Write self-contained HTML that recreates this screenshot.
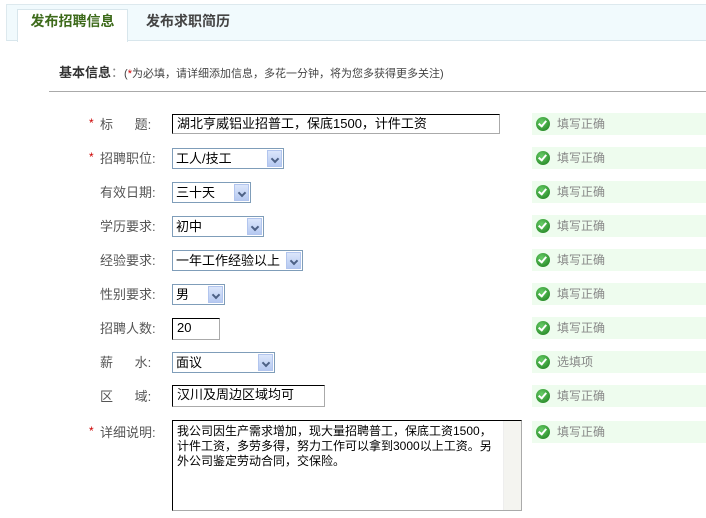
<!DOCTYPE html>
<html><head><meta charset="utf-8"><style>
body{margin:0;width:706px;height:518px;background:#fff;font-family:"Liberation Sans","Noto Sans CJK SC",sans-serif;font-size:12px;position:relative;overflow:hidden}
.a{position:absolute}
.top{left:6px;top:4px;width:700px;height:35px;background:#f1fafd;border-top:1px solid #dde9ee;border-left:1px solid #dde9ee;border-bottom:1px solid #d8e6ec}
.tab1{left:17px;top:9px;width:109px;height:32px;background:#fff;border:1px solid #d8e6ec;border-bottom:none;color:#3d6a1a;font-weight:bold;font-size:14px;line-height:22px;text-align:center}
.tab2{left:146px;top:11px;color:#444;font-weight:bold;font-size:14px}
.lbl{left:100px;color:#555;font-size:13px;width:70px}
.st{color:#c00;left:89px;font-size:12px}
.in{left:172px;height:20px;border:1px solid #aaa;border-top-color:#000;border-left-color:#000;box-sizing:border-box;font-size:13px;line-height:18px;padding-left:4px;color:#000;background:#fff}
.sel{left:172px;height:21px;border:1px solid #7f9db9;box-sizing:border-box;font-size:13px;line-height:19px;padding-left:3px;background:#fff}
.sel i{position:absolute;right:1px;top:1px;width:15px;height:17px;background:linear-gradient(#dbe6fb,#b6c9f1);border:1px solid #b2c5ee;box-sizing:border-box}
.sel i:after{content:"";position:absolute;left:4px;top:5px;width:4px;height:4px;border-right:2px solid #4d6185;border-bottom:2px solid #4d6185;transform:rotate(45deg)}
.ok{left:532px;width:174px;height:22px;background:#eefcee;color:#888;font-size:12px;line-height:22px;padding-left:25px;box-sizing:border-box}
.ok b{position:absolute;left:4px;top:4px;width:14px;height:14px;border-radius:50%;background:radial-gradient(circle at 40% 35%,#6c6,#1a7a1a)}
.ok b:after{content:"";position:absolute;left:4px;top:2px;width:3px;height:6px;border-right:2px solid #fff;border-bottom:2px solid #fff;transform:rotate(40deg)}
</style></head><body>
<div class="a top"></div>
<div class="a tab1">发布招聘信息</div>
<div class="a tab2">发布求职简历</div>
<div class="a" style="left:59px;top:62px;font-size:13px;font-weight:bold;color:#333">基本信息<span style="font-weight:normal;color:#888">：</span><span style="font-weight:normal;font-size:11px;color:#444">(<span style="color:#c00">*</span>为必填，请详细添加信息，多花一分钟，将为您多获得更多关注)</span></div>
<div class="a" style="left:49px;top:91px;width:657px;height:1px;background:#aaa"></div>

<div class="a st" style="top:116px">*</div><div class="a lbl" style="top:114px">标&nbsp;&nbsp;&nbsp;&nbsp;&nbsp;&nbsp;题:</div>
<div class="a in" style="top:114px;width:328px">湖北亨威铝业招普工，保底1500，计件工资</div>
<div class="a st" style="top:150px">*</div><div class="a lbl" style="top:148px">招聘职位:</div>
<div class="a sel" style="top:148px;width:112px">工人/技工<i></i></div>
<div class="a lbl" style="top:182px">有效日期:</div>
<div class="a sel" style="top:182px;width:79px">三十天<i></i></div>
<div class="a lbl" style="top:216px">学历要求:</div>
<div class="a sel" style="top:216px;width:92px">初中<i></i></div>
<div class="a lbl" style="top:250px">经验要求:</div>
<div class="a sel" style="top:250px;width:131px">一年工作经验以上<i></i></div>
<div class="a lbl" style="top:284px">性别要求:</div>
<div class="a sel" style="top:284px;width:53px">男<i></i></div>
<div class="a lbl" style="top:318px">招聘人数:</div>
<div class="a in" style="top:318px;width:48px;height:22px">20</div>
<div class="a lbl" style="top:352px">薪&nbsp;&nbsp;&nbsp;&nbsp;&nbsp;&nbsp;水:</div>
<div class="a sel" style="top:352px;width:103px">面议<i></i></div>
<div class="a lbl" style="top:386px">区&nbsp;&nbsp;&nbsp;&nbsp;&nbsp;&nbsp;域:</div>
<div class="a in" style="top:385px;width:153px;height:22px">汉川及周边区域均可</div>
<div class="a st" style="top:424px">*</div><div class="a lbl" style="top:422px">详细说明:</div>
<div class="a in" style="top:420px;width:350px;height:91px;font-size:12px;line-height:15px;padding:3px 22px 0 4px">我公司因生产需求增加，现大量招聘普工，保底工资1500，计件工资，多劳多得，努力工作可以拿到3000以上工资。另外公司鉴定劳动合同，交保险。
<div class="a" style="right:0;top:0;width:17px;height:89px;background:#f4f4f0;border-left:1px solid #eee"></div></div>

<div class="a ok" style="top:113px"><b></b>填写正确</div>
<div class="a ok" style="top:147px"><b></b>填写正确</div>
<div class="a ok" style="top:181px"><b></b>填写正确</div>
<div class="a ok" style="top:215px"><b></b>填写正确</div>
<div class="a ok" style="top:249px"><b></b>填写正确</div>
<div class="a ok" style="top:283px"><b></b>填写正确</div>
<div class="a ok" style="top:317px"><b></b>填写正确</div>
<div class="a ok" style="top:351px"><b></b>选填项</div>
<div class="a ok" style="top:385px"><b></b>填写正确</div>
<div class="a ok" style="top:421px"><b></b>填写正确</div>
</body></html>
